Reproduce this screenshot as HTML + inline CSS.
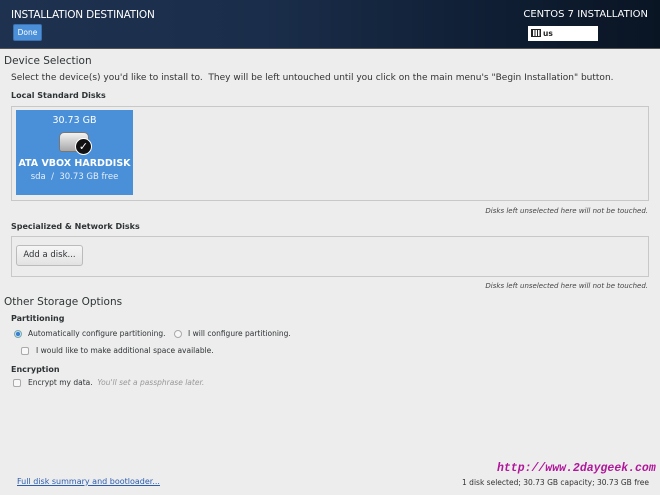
<!DOCTYPE html>
<html><head><style>
*{margin:0;padding:0;box-sizing:border-box}
body{width:660px;height:495px;background:#ededed;font-family:"DejaVu Sans","Liberation Sans",sans-serif;color:#2e3436;position:relative;overflow:hidden}
.a{position:absolute;white-space:nowrap}
#hd{position:absolute;left:0;top:0;width:660px;height:49px;background:linear-gradient(90deg,#1e3250 0%,#1a2d4a 40%,#0f1e33 75%,#0a1524 100%);border-bottom:1px solid #555}
.s{font-size:8px;font-weight:bold}
.box{position:absolute;border:1px solid #c8c8c8;background:#ececec}
.rad{position:absolute;width:8px;height:8px;border-radius:50%;border:1px solid #aaa;background:#f8f8f8}
.chk{position:absolute;width:8px;height:8px;border:1px solid #aaa;border-radius:2px;background:#f8f8f8}
</style></head><body>
<div id="hd">
<div class="a" style="left:11px;top:9px;color:#fff;font-size:10.5px;font-weight:normal;letter-spacing:-0.2px">INSTALLATION DESTINATION</div>
<div class="a" style="left:13px;top:24px;width:29px;height:17px;background:#4a8fd8;border:1px solid #3a6fb0;border-radius:2px;color:#fff;font-size:7.5px;text-align:center;line-height:15px">Done</div>
<div class="a" style="right:12px;top:9px;color:#fff;font-size:10px">CENTOS 7 INSTALLATION</div>
<div class="a" style="left:528px;top:26px;width:70px;height:15px;background:#fff;font-size:7.5px;font-weight:bold;line-height:15px;padding-left:15px;color:#222">us
<div style="position:absolute;left:3px;top:3px;width:10px;height:8px;border:1px solid #222;background:repeating-linear-gradient(90deg,#222 0 1px,#fff 1px 2.5px)"></div></div>
</div>
<div class="a" style="left:4px;top:55px;font-size:10.5px;font-weight:500">Device Selection</div>
<div class="a" style="left:11px;top:73px;font-size:9px;color:#333">Select the device(s) you'd like to install to.&nbsp; They will be left untouched until you click on the main menu's "Begin Installation" button.</div>
<div class="a s" style="left:11px;top:91px">Local Standard Disks</div>
<div class="box" style="left:11px;top:106px;width:638px;height:95px"></div>
<div class="a" style="left:16px;top:110px;width:117px;height:85px;background:#4a90d9;color:#fff;text-align:center">
<div style="font-size:9.5px;margin-top:5px">30.73 GB</div>
<div style="position:relative;height:26px;margin-top:4px">
<div style="position:absolute;left:43px;top:2px;width:30px;height:20px;border-radius:5px 5px 3px 3px;background:linear-gradient(#f2f2f2,#a8a8a8);border:1px solid #777"></div>
<div style="position:absolute;left:59px;top:8px;width:17px;height:17px;border-radius:50%;background:#111;border:1px solid #fff;font-size:11px;line-height:15px;font-weight:bold">✓</div>
</div>
<div style="font-size:9.5px;font-weight:bold;margin-top:2px">ATA VBOX HARDDISK</div>
<div style="font-size:8.5px;margin-top:3px;color:#e6eef8">sda &nbsp;/ &nbsp;30.73 GB free</div>
</div>
<div class="a" style="right:12px;top:207px;font-size:7px;font-style:italic;color:#444">Disks left unselected here will not be touched.</div>
<div class="a s" style="left:11px;top:222px">Specialized &amp; Network Disks</div>
<div class="box" style="left:11px;top:236px;width:638px;height:41px"></div>
<div class="a" style="left:16px;top:245px;width:67px;height:21px;border:1px solid #bbb;border-radius:3px;background:linear-gradient(#f6f6f6,#e2e2e2);font-size:8.5px;line-height:19px;text-align:center">Add a disk...</div>
<div class="a" style="right:12px;top:282px;font-size:7px;font-style:italic;color:#444">Disks left unselected here will not be touched.</div>
<div class="a" style="left:4px;top:296px;font-size:10.5px;font-weight:500">Other Storage Options</div>
<div class="a s" style="left:11px;top:314px">Partitioning</div>
<div class="rad" style="left:14px;top:330px;background:radial-gradient(#3a7fd0 45%,#cfe0f5 55%);border-color:#7aa"></div>
<div class="a" style="left:28px;top:329px;font-size:7.5px">Automatically configure partitioning.</div>
<div class="rad" style="left:174px;top:330px"></div>
<div class="a" style="left:188px;top:329px;font-size:7.5px">I will configure partitioning.</div>
<div class="chk" style="left:21px;top:347px"></div>
<div class="a" style="left:36px;top:346px;font-size:7.5px">I would like to make additional space available.</div>
<div class="a s" style="left:11px;top:365px">Encryption</div>
<div class="chk" style="left:13px;top:379px"></div>
<div class="a" style="left:28px;top:378px;font-size:7.5px">Encrypt my data. <i style="color:#999">&nbsp;You'll set a passphrase later.</i></div>
<div class="a" style="left:17px;top:477px;font-size:8px;color:#2a5db0;text-decoration:underline">Full disk summary and bootloader...</div>
<div class="a" style="left:497px;top:462px;font-family:'Liberation Mono',monospace;font-size:11.5px;font-weight:bold;font-style:italic;color:#b0169a">http://www.2daygeek.com</div>
<div class="a" style="right:11px;top:478px;font-size:7.5px;color:#333">1 disk selected; 30.73 GB capacity; 30.73 GB free</div>
</body></html>
